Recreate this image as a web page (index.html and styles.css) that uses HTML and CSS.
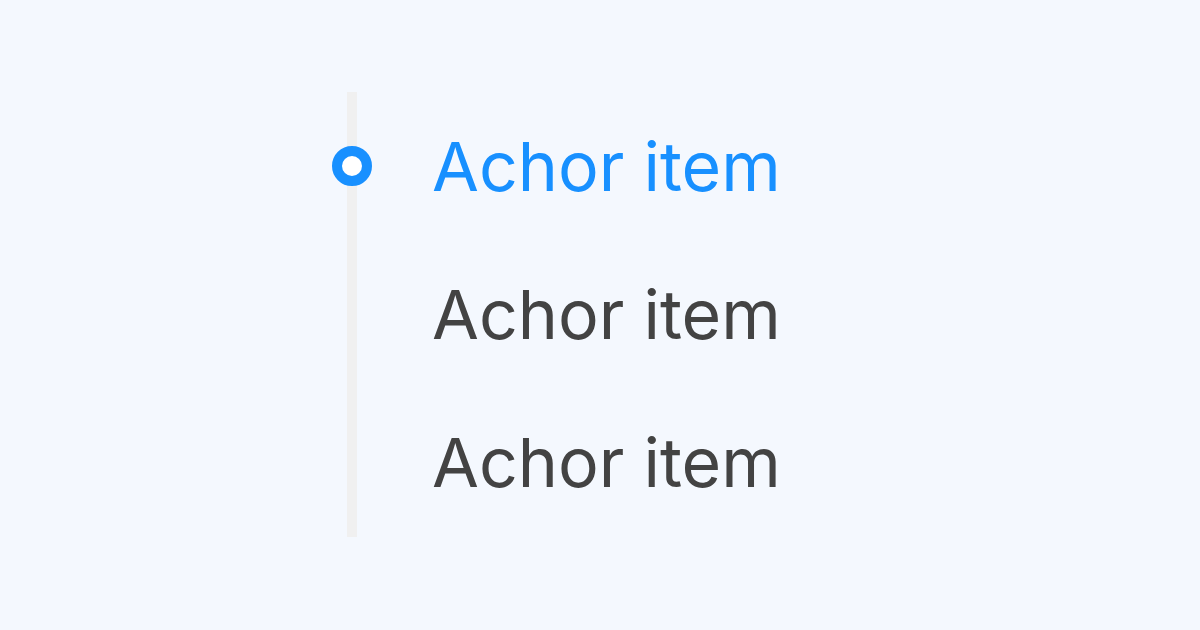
FILE: index.html
```html
<!DOCTYPE html>
<html lang="en">
  <head>
    <link rel="stylesheet" href="styles.css">
  </head>
  <body>
    <div class="anchor">
      <div class="anchor-ink">
        <span class="ink-ball"></span>
      </div>
      <div class="anchor-links">
        <a class="anchor-link active" href="#">Achor item</a>
        <a class="anchor-link" href="#">Achor item</a>
        <a class="anchor-link" href="#">Achor item</a>
      </div>
    </div>
  </body>
</html>
```

FILE: styles.css
```css
body {
  margin: 0;
  width: 1200px;
  height: 630px;
  background-color: #f4f8fe;
  font-family: Inter, "Noto Sans", sans-serif;
}

.anchor {
  display: flex;
  padding: 92px 0 0 347px;
}

.anchor-ink {
  position: relative;
  width: 10px;
  height: 445px;
  background-color: #f0f0f0;
}

.ink-ball {
  position: absolute;
  left: -15px;
  top: 54px;
  width: 20px;
  height: 20px;
  border: 10px solid #1890ff;
  border-radius: 50%;
  background-color: #fff;
}

.anchor-links {
  display: flex;
  flex-direction: column;
  padding-left: 75px;
}

.anchor-link {
  display: block;
  padding: 35px 0;
  font-size: 68px;
  line-height: 78px;
  color: #434343;
  text-decoration: none;
}

.anchor-link.active {
  color: #1890ff;
}
```
